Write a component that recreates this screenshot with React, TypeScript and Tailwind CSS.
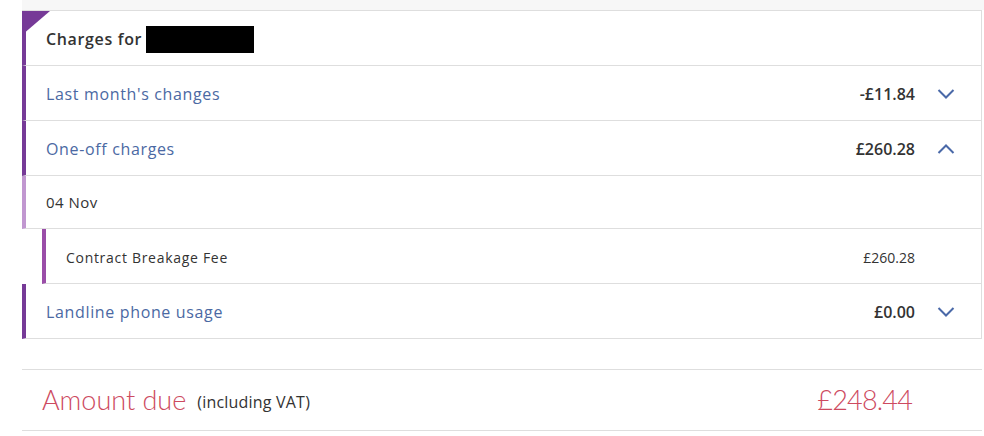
import React from "react";

const Chevron = ({ up }: { up?: boolean }) => (
  <svg width="18" height="10" viewBox="0 0 18 10" className="block">
    <path
      d={up ? "M1.5 9 L9 1.5 L16.5 9" : "M1.5 1 L9 8.5 L16.5 1"}
      fill="none"
      stroke="#4a69a8"
      strokeWidth="2"
    />
  </svg>
);

const Row = ({
  label,
  amount,
  up,
}: {
  label: string;
  amount: string;
  up?: boolean;
}) => (
  <div className="flex h-[55px] items-center border-b border-l-4 border-b-[#dedede] border-l-[#763a97] pl-5 pr-[26px] pt-[2px]">
    <span className="flex-1 text-[16px] tracking-[0.65px] text-[#4b69a3]">{label}</span>
    <span className="text-[16px] font-semibold text-[#333]">{amount}</span>
    <span className="ml-[22px]">
      <Chevron up={up} />
    </span>
  </div>
);

export default function App() {
  return (
    <div className="h-[436px] w-[984px] bg-white font-['Open_Sans',sans-serif]">
      <div className="ml-[22px] h-[10px] bg-[#f7f7f7]" />
      <div className="relative ml-[22px] w-[960px] border-r border-t border-[#dedede]">
        <div className="absolute left-0 top-0 h-0 w-0 border-l-[14px] border-t-[12px] border-l-[#763a97] border-t-[#763a97] border-r-[14px] border-b-[12px] border-r-transparent border-b-transparent" />
        <div className="flex h-[55px] items-center border-b border-l-4 border-b-[#dedede] border-l-[#763a97] pl-5 pt-[2px]">
          <span className="text-[16px] font-semibold tracking-[0.65px] text-[#333]">
            Charges for
          </span>
          <span className="ml-[4px] h-[27px] w-[108px] bg-black" />
        </div>
        <Row label="Last month's changes" amount="-£11.84" />
        <Row label="One-off charges" amount="£260.28" up />
        <div className="flex h-[53px] items-center border-b border-l-4 border-b-[#dedede] border-l-[#c197d0] pl-5">
          <span className="text-[15px] tracking-[0.5px] text-[#333]">04 Nov</span>
        </div>
        <div className="ml-5 flex h-[55px] items-center border-b border-l-4 border-b-[#dedede] border-l-[#9a4da8] pl-5 pr-[66px] pt-[2px]">
          <span className="flex-1 text-[14px] tracking-[0.7px] text-[#333]">
            Contract Breakage Fee
          </span>
          <span className="text-[14px] text-[#333]">£260.28</span>
        </div>
        <Row label="Landline phone usage" amount="£0.00" />
      </div>
      <div className="ml-[22px] mt-[30px] flex h-[62px] w-[960px] items-center border-y border-[#dedede] pl-5 pr-[70px]">
        <span className="font-['Lato',sans-serif] text-[27px] font-light text-[#cd4a60]">
          Amount due
        </span>
        <span className="ml-[11px] mt-[3px] text-[16px] tracking-[0.2px] text-[#333]">
          (including VAT)
        </span>
        <span className="flex-1" />
        <span className="font-['Lato',sans-serif] text-[27px] font-light tracking-[-0.8px] text-[#cd4a60]">
          £248.44
        </span>
      </div>
    </div>
  );
}
